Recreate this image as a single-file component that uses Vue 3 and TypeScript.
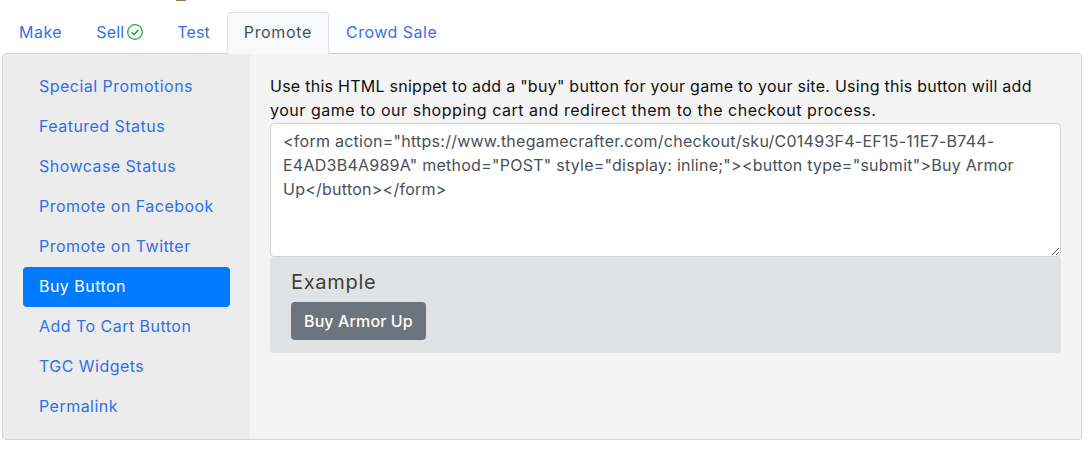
<script setup lang="ts">
const tabs = [
  { label: 'Make' },
  { label: 'Sell', done: true },
  { label: 'Test' },
  { label: 'Promote', active: true },
  { label: 'Crowd Sale' },
]
const items = ['Special Promotions', 'Featured Status', 'Showcase Status', 'Promote on Facebook', 'Promote on Twitter', 'Buy Button', 'Add To Cart Button', 'TGC Widgets', 'Permalink']
const snippet = '<form action="https://www.thegamecrafter.com/checkout/sku/C01493F4-EF15-11E7-B744-E4AD3B4A989A" method="POST" style="display: inline;"><button type="submit">Buy Armor Up</button></form>'
</script>

<template>
  <div class="page">
    <span class="speck"></span>
    <ul class="tabs">
      <li v-for="t in tabs" :key="t.label" class="tab" :class="{ active: t.active, done: t.done }">
        {{ t.label }}
        <svg v-if="t.done" class="check" viewBox="0 0 16 16" width="16" height="16" fill="none" stroke="#28a745">
          <circle cx="8" cy="8" r="7.3" stroke-width="1.3" />
          <path d="M4.6 8.2l2.4 2.4 4.5-4.9" stroke-width="1.6" />
        </svg>
      </li>
    </ul>
    <div class="card">
      <nav class="side">
        <a v-for="i in items" :key="i" class="link" :class="{ on: i === 'Buy Button' }">{{ i }}</a>
      </nav>
      <div class="main">
        <p class="intro">Use this HTML snippet to add a "buy" button for your game to your site. Using this button will add <span class="wide">your game to our shopping cart and redirect them to the checkout process.</span></p>
        <textarea class="code" :value="snippet" spellcheck="false"></textarea>
        <div class="example">
          <h5>Example</h5>
          <button class="buy" type="button">Buy Armor Up</button>
        </div>
      </div>
    </div>
  </div>
</template>

<style>
html, body { margin: 0; background: #fff; }
</style>

<style scoped>
.page { position: relative; width: 1090px; height: 456px; box-sizing: border-box; padding: 12px 8px 0 2px; font-family: Inter, "Open Sans", sans-serif; font-size: 16px; line-height: 24px; color: #212529; overflow: hidden; }
.speck { position: absolute; left: 176px; top: 0; width: 10px; height: 1px; background: #8a7a50; }
.tabs { display: flex; list-style: none; margin: 0; padding: 0; height: 42px; letter-spacing: 0.5px; }
.tab { display: flex; align-items: center; gap: 3px; height: 42px; box-sizing: border-box; padding: 0 16px 2px; border: 1px solid transparent; border-radius: 4px 4px 0 0; color: #3b6ee8; }
.tab.done { letter-spacing: 0.2px; }
.tab:nth-child(3) { letter-spacing: 0.1px; }
.tab.active { background: #f8f9fa; border-color: #dee2e6 #dee2e6 #f8f9fa; color: #495057; position: relative; z-index: 1; letter-spacing: 0.65px; }
.card { display: flex; height: 387px; box-sizing: border-box; margin-top: -1px; border: 1px solid #d4d4d4; border-radius: 4px; background: #f4f4f4; }
.side { width: 247px; box-sizing: border-box; flex: none; background: #ececec; padding: 13px 20px; display: flex; flex-direction: column; border-radius: 3px 0 0 3px; letter-spacing: 0.47px; }
.link { display: block; height: 40px; box-sizing: border-box; padding: 7px 16px 9px; border-radius: 4px; color: #2f70e8; }
.link.on { background: #007bff; color: #fff; }
.main { flex: 1; padding: 20px 20px 0; min-width: 0; }
.intro { margin: 0 0 1px; color: #111; letter-spacing: 0.26px; }
.wide { letter-spacing: 0.53px; }
.code { display: block; width: 100%; height: 134px; box-sizing: border-box; padding: 5px 12px; margin: 0; border: 1px solid #ced4da; border-radius: 4px; background: #fff; color: #495057; font: inherit; letter-spacing: 0.25px; resize: vertical; outline: none; }
.example { background: #e1e2e4; border-radius: 4px; height: 96px; box-sizing: border-box; padding: 13px 21px; }
h5 { margin: 0 0 8px; font-size: 20px; font-weight: 400; line-height: 24px; letter-spacing: 0.7px; color: #3f3f3f; }
.buy { display: block; height: 38px; padding: 0 13px; border: 0; border-radius: 4px; background: #6c757d; color: #fff; font: inherit; font-weight: 500; letter-spacing: 0.12px; }
</style>
